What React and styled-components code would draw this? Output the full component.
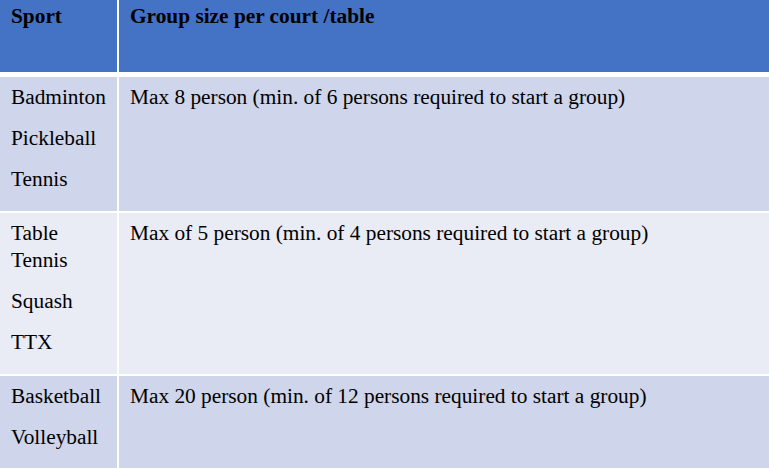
import React from "react";
import styled, { createGlobalStyle } from "styled-components";

const Global = createGlobalStyle`
  html, body { margin: 0; padding: 0; background: #ffffff; }
  body { font-family: "Liberation Serif", "Times New Roman", serif; color: #000; }
`;

const Table = styled.div`
  display: grid;
  grid-template-columns: 117px 1fr;
  column-gap: 2px;
  width: 769px;
  background: #ffffff;
`;

const HeadCell = styled.div`
  box-sizing: border-box;
  height: 77px;
  background: #4472c4;
  border-bottom: 5px solid #ffffff;
  padding: 3px 11px 0 11px;
  font-size: 21.33px;
  font-weight: bold;
  line-height: 27px;
`;

const Cell = styled.div`
  box-sizing: border-box;
  background: ${(p) => (p.$alt ? "#e9ebf5" : "#cfd5ea")};
  border-bottom: 2px solid #ffffff;
  padding: 7px 11px 4px 11px;
  font-size: 21.33px;
  line-height: 27px;
`;

const Para = styled.p`
  margin: 0 0 14px 0;
`;

const rows = [
  {
    sports: ["Badminton", "Pickleball", "Tennis"],
    size: "Max 8 person (min. of 6 persons required to start a group)",
  },
  {
    sports: ["Table Tennis", "Squash", "TTX"],
    size: "Max of 5 person (min. of 4 persons required to start a group)",
  },
  {
    sports: ["Basketball", "Volleyball"],
    size: "Max 20 person (min. of 12 persons required to start a group)",
  },
];

export default function App() {
  return (
    <>
      <Global />
      <Table>
        <HeadCell>Sport</HeadCell>
        <HeadCell>Group size per court /table</HeadCell>
        {rows.map((r, i) => (
          <React.Fragment key={i}>
            <Cell $alt={i % 2 === 1}>
              {r.sports.map((s) => (
                <Para key={s}>{s}</Para>
              ))}
            </Cell>
            <Cell $alt={i % 2 === 1}>
              <Para>{r.size}</Para>
            </Cell>
          </React.Fragment>
        ))}
      </Table>
    </>
  );
}
